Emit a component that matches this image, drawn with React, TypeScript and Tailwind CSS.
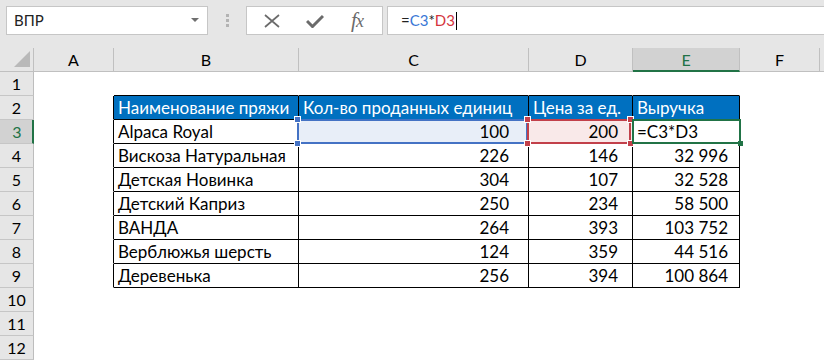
import React from "react";

interface Col {
  key: string;
  w: string;
}

const cols: Col[] = [
  { key: "A", w: "w-[80px]" },
  { key: "B", w: "w-[185px]" },
  { key: "C", w: "w-[230px]" },
  { key: "D", w: "w-[104px]" },
  { key: "E", w: "w-[107px]" },
  { key: "F", w: "w-[80px]" },
];

const rows = [
  ["Alpaca Royal", "100", "200", "=C3*D3"],
  ["Вискоза Натуральная", "226", "146", "32 996"],
  ["Детская Новинка", "304", "107", "32 528"],
  ["Детский Каприз", "250", "234", "58 500"],
  ["ВАНДА", "264", "393", "103 752"],
  ["Верблюжья шерсть", "124", "359", "44 516"],
  ["Деревенька", "256", "394", "100 864"],
];

const head = ["Наименование пряжи", "Кол-во проданных единиц", "Цена за ед.", "Выручка"];
const numPad = ["", "pr-[19px]", "pr-[14px]", "pr-[11px]"];

function Handle({ pos, color }: { pos: string; color: string }) {
  return <div className={`absolute w-[7px] h-[7px] border border-white ${pos} ${color}`} />;
}

function FormulaBar() {
  return (
    <div className="h-[48px] flex items-start pt-[6px] pl-[6px] gap-0">
      <div className="w-[202px] h-[29px] bg-white border border-[#c6c6c6] flex items-center pl-[7px] pr-[8px] text-[15px] text-[#222]">
        <span className="flex-1">ВПР</span>
        <svg width="8" height="5" viewBox="0 0 8 5">
          <path d="M0 0 L8 0 L4 4 Z" fill="#6f6f6f" />
        </svg>
      </div>
      <div className="w-[38px] h-[29px] flex flex-col items-center justify-center gap-[2px]">
        <div className="w-[3px] h-[3px] bg-[#b3b3b3]" />
        <div className="w-[3px] h-[3px] bg-[#b3b3b3]" />
        <div className="w-[3px] h-[3px] bg-[#b3b3b3]" />
      </div>
      <div className="w-[137px] h-[29px] bg-white border border-[#c6c6c6] flex items-center">
        <div className="w-[43px] flex justify-center ml-[3px]">
          <svg width="16" height="14" viewBox="0 0 16 14">
            <path d="M1 1 L15 13 M15 1 L1 13" stroke="#6b6b6b" strokeWidth="1.7" />
          </svg>
        </div>
        <div className="w-[43px] flex justify-center">
          <svg width="18" height="14" viewBox="0 0 18 14">
            <path d="M1 7 L6.5 12.5 L17 2" stroke="#6b6b6b" strokeWidth="3" fill="none" />
          </svg>
        </div>
        <div
          className="w-[43px] flex justify-center items-baseline text-[#6b6b6b] italic text-[21px] leading-none"
          style={{ fontFamily: "'Liberation Serif', serif" }}
        >
          <span>f</span>
          <span className="text-[18px] -ml-[1px]">x</span>
        </div>
      </div>
      <div className="flex-1 ml-[4px] h-[29px] bg-white border border-r-0 border-[#c6c6c6] flex items-center pl-[13px] text-[15px] text-[#222]">
        <span>=</span>
        <span className="text-[#3a78d6]">C3</span>
        <span>*</span>
        <span className="text-[#d4343c]">D3</span>
        <span className="w-px h-[18px] bg-black ml-[1px]" />
      </div>
    </div>
  );
}

function ColumnHeaders() {
  return (
    <div className="flex h-[24px]">
      <div className="w-[34px] shrink-0 border-r border-b border-[#c0c0c0] relative">
        <svg className="absolute left-[14px] top-[3px]" width="16" height="16" viewBox="0 0 16 16">
          <path d="M16 0 L16 16 L0 16 Z" fill="#b9b9b9" />
        </svg>
      </div>
      {cols.map((c) => {
        const sel = c.key === "E";
        return (
          <div
            key={c.key}
            className={`${c.w} shrink-0 border-r border-[#c0c0c0] flex items-center justify-center text-[16px] pt-[1px] ${
              sel ? "bg-[#d2d2d2] text-[#217346] border-b-2 border-b-[#217346]" : "border-b text-black"
            }`}
          >
            {c.key}
          </div>
        );
      })}
      <div className="flex-1 border-b border-[#c0c0c0]" />
    </div>
  );
}

function RowHeader({ n }: { n: number }) {
  const sel = n === 3;
  return (
    <div
      className={`w-[34px] shrink-0 border-b border-[#c6c6c6] flex items-center justify-center text-[16px] ${
        sel
          ? "bg-[#d2d2d2] text-[#217346] border-r-2 border-r-[#217346] pl-[2px]"
          : "bg-[#e6e6e6] text-black border-r border-r-[#bdbdbd]"
      }`}
    >
      {n}
    </div>
  );
}

function SheetRow({ n }: { n: number }) {
  const inTable = n >= 2 && n <= 9;
  const data = n === 2 ? head : n >= 3 && n <= 9 ? rows[n - 3] : null;

  return (
    <div className="flex h-[24px]">
      <RowHeader n={n} />
      {cols.map((c, i) => {
        const tableCol = i >= 1 && i <= 4;
        const idx = i - 1;
        let cls = `${c.w} shrink-0 border-r border-b border-transparent relative flex items-center text-[17px] whitespace-nowrap pt-[1px]`;
        if (i === 0 && inTable) cls += " border-r-black";
        if (tableCol && n >= 1 && n <= 9) cls += " border-b-black";
        if (tableCol && inTable) cls += " border-r-black";
        if (tableCol && n === 2) cls += " bg-[#0070c0] text-white pl-[4px]";
        else if (tableCol && data) {
          cls += idx === 0 || (n === 3 && idx === 3) ? " pl-[4px] text-black" : ` justify-end text-black ${numPad[idx]}`;
        }
        if (n === 3 && idx === 1) cls += " bg-[#e8eef8]";
        if (n === 3 && idx === 2) cls += " bg-[#f9e9e9]";

        return (
          <div key={c.key} className={cls}>
            {tableCol && data ? <span className="relative z-30">{data[idx]}</span> : null}
            {n === 3 && idx === 1 && (
              <div className="absolute -left-[2px] -top-[1px] right-0 -bottom-[1px] border-2 border-[#4472c4] z-10">
                <Handle pos="-left-[5px] -top-[5px]" color="bg-[#4472c4]" />
                <Handle pos="-left-[5px] -bottom-[5px]" color="bg-[#4472c4]" />
              </div>
            )}
            {n === 3 && idx === 2 && (
              <div className="absolute -left-[2px] -top-[1px] right-[1px] -bottom-[1px] border-2 border-[#c2404a] z-20">
                <Handle pos="-left-[5px] -top-[5px]" color="bg-[#c2404a]" />
                <Handle pos="-left-[5px] -bottom-[5px]" color="bg-[#c2404a]" />
                <Handle pos="-right-[5px] -top-[5px]" color="bg-[#c2404a]" />
                <Handle pos="-right-[5px] -bottom-[5px]" color="bg-[#c2404a]" />
              </div>
            )}
            {n === 3 && idx === 3 && (
              <div className="absolute -left-[1px] -top-[1px] -right-[2px] -bottom-[1px] border-2 border-[#217346] z-20">
                <div className="absolute -right-[4px] -bottom-[4px] w-[5px] h-[5px] bg-[#217346]" />
              </div>
            )}
          </div>
        );
      })}
      <div className="flex-1" />
    </div>
  );
}

export default function App() {
  return (
    <div
      className="w-[824px] h-[360px] overflow-hidden bg-[#e6e6e6] flex flex-col"
      style={{ fontFamily: "Lato, 'Open Sans', sans-serif" }}
    >
      <FormulaBar />
      <ColumnHeaders />
      <div className="flex-1 bg-white">
        {Array.from({ length: 12 }, (_, i) => (
          <SheetRow key={i} n={i + 1} />
        ))}
      </div>
    </div>
  );
}
